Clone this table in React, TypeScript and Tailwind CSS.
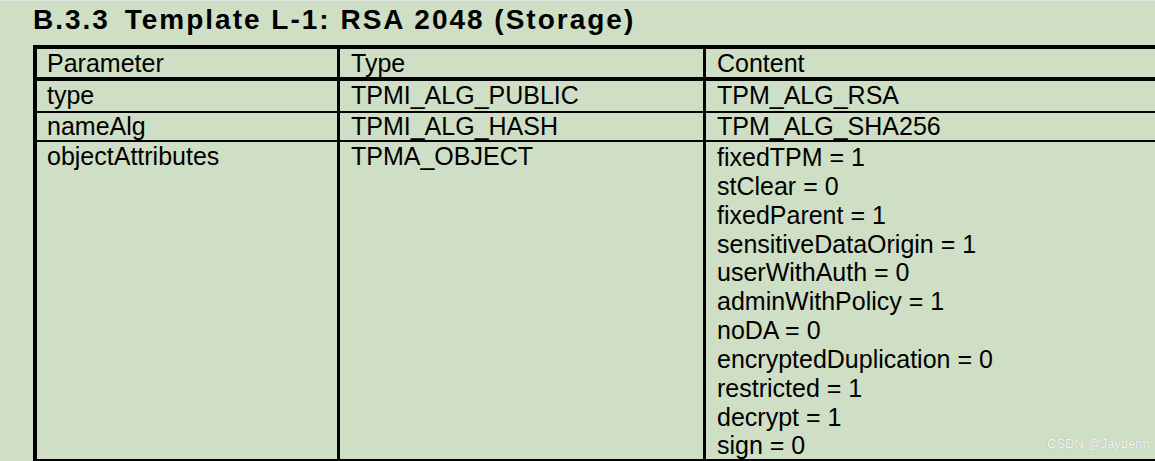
import React from 'react';

const attributes = [
  'fixedTPM = 1',
  'stClear = 0',
  'fixedParent = 1',
  'sensitiveDataOrigin = 1',
  'userWithAuth = 0',
  'adminWithPolicy = 1',
  'noDA = 0',
  'encryptedDuplication = 0',
  'restricted = 1',
  'decrypt = 1',
  'sign = 0',
];

const font = { fontFamily: '"Liberation Sans", Arial, sans-serif' };

function Row({
  cells,
  className,
}: {
  cells: React.ReactNode[];
  className: string;
}) {
  return (
    <div className={`grid grid-cols-[303px_366px_1fr] ${className}`}>
      <div className="border-r-[3px] border-black pl-[10px]">{cells[0]}</div>
      <div className="border-r-[3px] border-black pl-[11px]">{cells[1]}</div>
      <div className="pl-[11px]">{cells[2]}</div>
    </div>
  );
}

export default function App() {
  return (
    <div
      className="w-[1155px] h-[461px] overflow-hidden bg-[#cfdfc5] text-black border-t border-[#e4e8e2]"
      style={font}
    >
      {/* Heading */}
      <div className="h-[44px] pl-[33px] pt-[2px] text-[28px] leading-[34px] font-bold tracking-[2px] whitespace-nowrap">
        <span className="mr-[5px]">B.3.3</span> Template L-1: RSA 2048 (Storage)
      </div>

      {/* Table */}
      <div className="relative ml-[33px] w-[1200px] border-l-4 border-t-4 border-b-4 border-black text-[25px] leading-[28.6px] whitespace-nowrap">
        <Row className="h-[32px] border-b-4 border-black" cells={['Parameter', 'Type', 'Content']} />
        <Row className="h-[32px] border-b-2 border-black" cells={['type', 'TPMI_ALG_PUBLIC', 'TPM_ALG_RSA']} />
        <Row
          className="h-[29px] border-b-2 border-black leading-[27px]"
          cells={['nameAlg', 'TPMI_ALG_HASH', 'TPM_ALG_SHA256']}
        />
        <Row
          className="h-[317px]"
          cells={[
            'objectAttributes',
            'TPMA_OBJECT',
            <div className="flex flex-col pt-px leading-[28.85px]">
              {attributes.map((a) => (
                <span key={a}>{a}</span>
              ))}
            </div>,
          ]}
        />
        <span className="absolute left-[1010px] top-[387px] text-[13px] leading-[16px] tracking-normal text-[#f6f8f4] [text-shadow:0_0_1px_#9a9a9a]">
          CSDN @Jaydenn
        </span>
      </div>
    </div>
  );
}
